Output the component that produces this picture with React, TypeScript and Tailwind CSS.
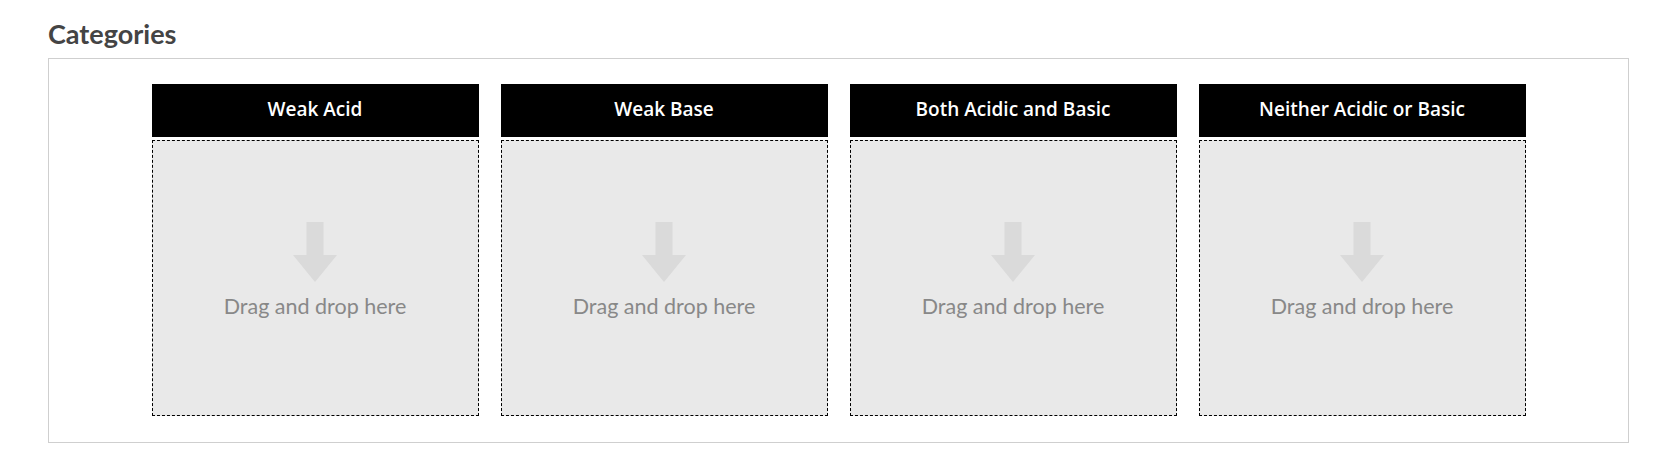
const CATEGORIES = [
  "Weak Acid",
  "Weak Base",
  "Both Acidic and Basic",
  "Neither Acidic or Basic",
];

function DropArrow() {
  return (
    <svg width="44" height="60" viewBox="0 0 44 60" aria-hidden>
      <path d="M13.5 0h17v33H44L22 60 0 33h13.5z" fill="#dadada" />
    </svg>
  );
}

function CategoryColumn({ title }: { title: string }) {
  return (
    <div className="flex flex-col w-[327px] shrink-0">
      <div className="h-[53px] bg-black flex items-center justify-center pb-[2px] text-white text-[19px] font-semibold font-['Open_Sans',sans-serif]">
        {title}
      </div>
      <div className="mt-[3px] h-[276px] border border-dashed border-black bg-[#e9e9e9] flex flex-col items-center justify-center pb-4">
        <DropArrow />
        <span className="mt-3 text-[21.5px] leading-6 text-[#888] font-['Lato',sans-serif]">
          Drag and drop here
        </span>
      </div>
    </div>
  );
}

export default function App() {
  return (
    <div className="min-h-screen bg-white pl-12 pt-[18px] font-['Lato',sans-serif]">
      <h2 className="text-[27px] leading-8 font-bold text-[#444] mb-[8px]">
        Categories
      </h2>
      <div className="w-[1581px] border border-[#cfcfcf] pt-[25px] pb-[26px] flex justify-center gap-[22px]">
        {CATEGORIES.map((c) => (
          <CategoryColumn key={c} title={c} />
        ))}
      </div>
    </div>
  );
}
